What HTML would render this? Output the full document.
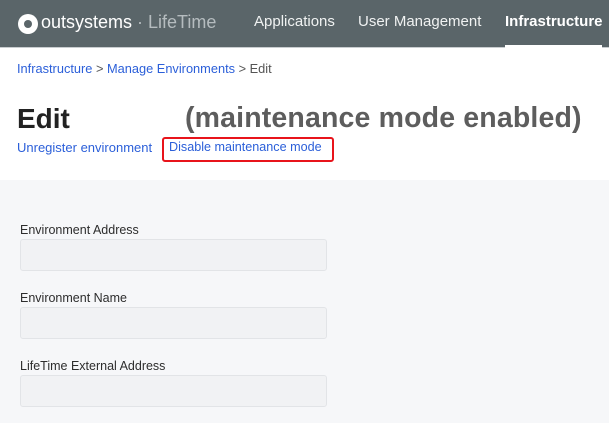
<!DOCTYPE html>
<html><head><meta charset="utf-8"><style>
*{margin:0;padding:0;box-sizing:border-box}
body{width:609px;height:423px;overflow:hidden;background:#fff;font-family:"Liberation Sans","DejaVu Sans",sans-serif;position:relative}
.hdr{position:absolute;left:0;top:0;width:609px;height:48px;background:#5a6569;border-bottom:1px solid #c9cdd0}
.abs{position:absolute;white-space:nowrap}
.nav{color:#f0f2f2;font-size:15px;top:13px}
.gray{position:absolute;left:0;top:180px;width:609px;height:243px;background:#f6f7f9}
.inp{position:absolute;left:20px;width:307px;height:32px;background:#f1f2f4;border:1px solid #e2e4e7;border-radius:3px}
.lbl{position:absolute;left:20px;font-size:12.5px;color:#2d2d2d}
</style></head><body>
<div class="hdr">
  <div class="abs" style="left:18px;top:14px;width:20px;height:20px;border-radius:50%;background:#fff"></div>
  <div class="abs" style="left:24px;top:20px;width:8px;height:8px;border-radius:50%;background:#5a6569"></div>
  <div class="abs" style="left:41px;top:12px;font-size:18px;color:#fff">outsystems <span style="color:#b5bcbf">· LifeTime</span></div>
  <div class="abs nav" style="left:254px">Applications</div>
  <div class="abs nav" style="left:358px">User Management</div>
  <div class="abs nav" style="left:505px;font-weight:bold;color:#fff">Infrastructure</div>
  <div class="abs" style="left:505px;top:45px;width:97px;height:3px;background:#fff"></div>
</div>
<div class="abs" style="left:17px;top:61px;font-size:12.8px;color:#555"><span style="color:#2b5fd9">Infrastructure</span> &gt; <span style="color:#2b5fd9">Manage Environments</span> &gt; Edit</div>
<div class="abs" style="left:17px;top:103px;font-size:28px;font-weight:bold;color:#222">Edit</div>
<div class="abs" style="left:185px;top:102px;font-size:28.5px;font-weight:bold;color:#5d5d5d;letter-spacing:0.15px">(maintenance mode enabled)</div>
<div class="abs" style="left:17px;top:140px;font-size:13px;color:#2b5fd9">Unregister environment</div>
<div class="abs" style="left:162px;top:137px;width:172px;height:25px;border:2px solid #e8141b;border-radius:3px"></div>
<div class="abs" style="left:169px;top:140px;font-size:12.6px;color:#2b5fd9">Disable maintenance mode</div>
<div class="gray"></div>
<div class="lbl" style="top:223px">Environment Address</div>
<div class="inp" style="top:239px"></div>
<div class="lbl" style="top:291px">Environment Name</div>
<div class="inp" style="top:307px"></div>
<div class="lbl" style="top:359px">LifeTime External Address</div>
<div class="inp" style="top:375px"></div>
</body></html>
